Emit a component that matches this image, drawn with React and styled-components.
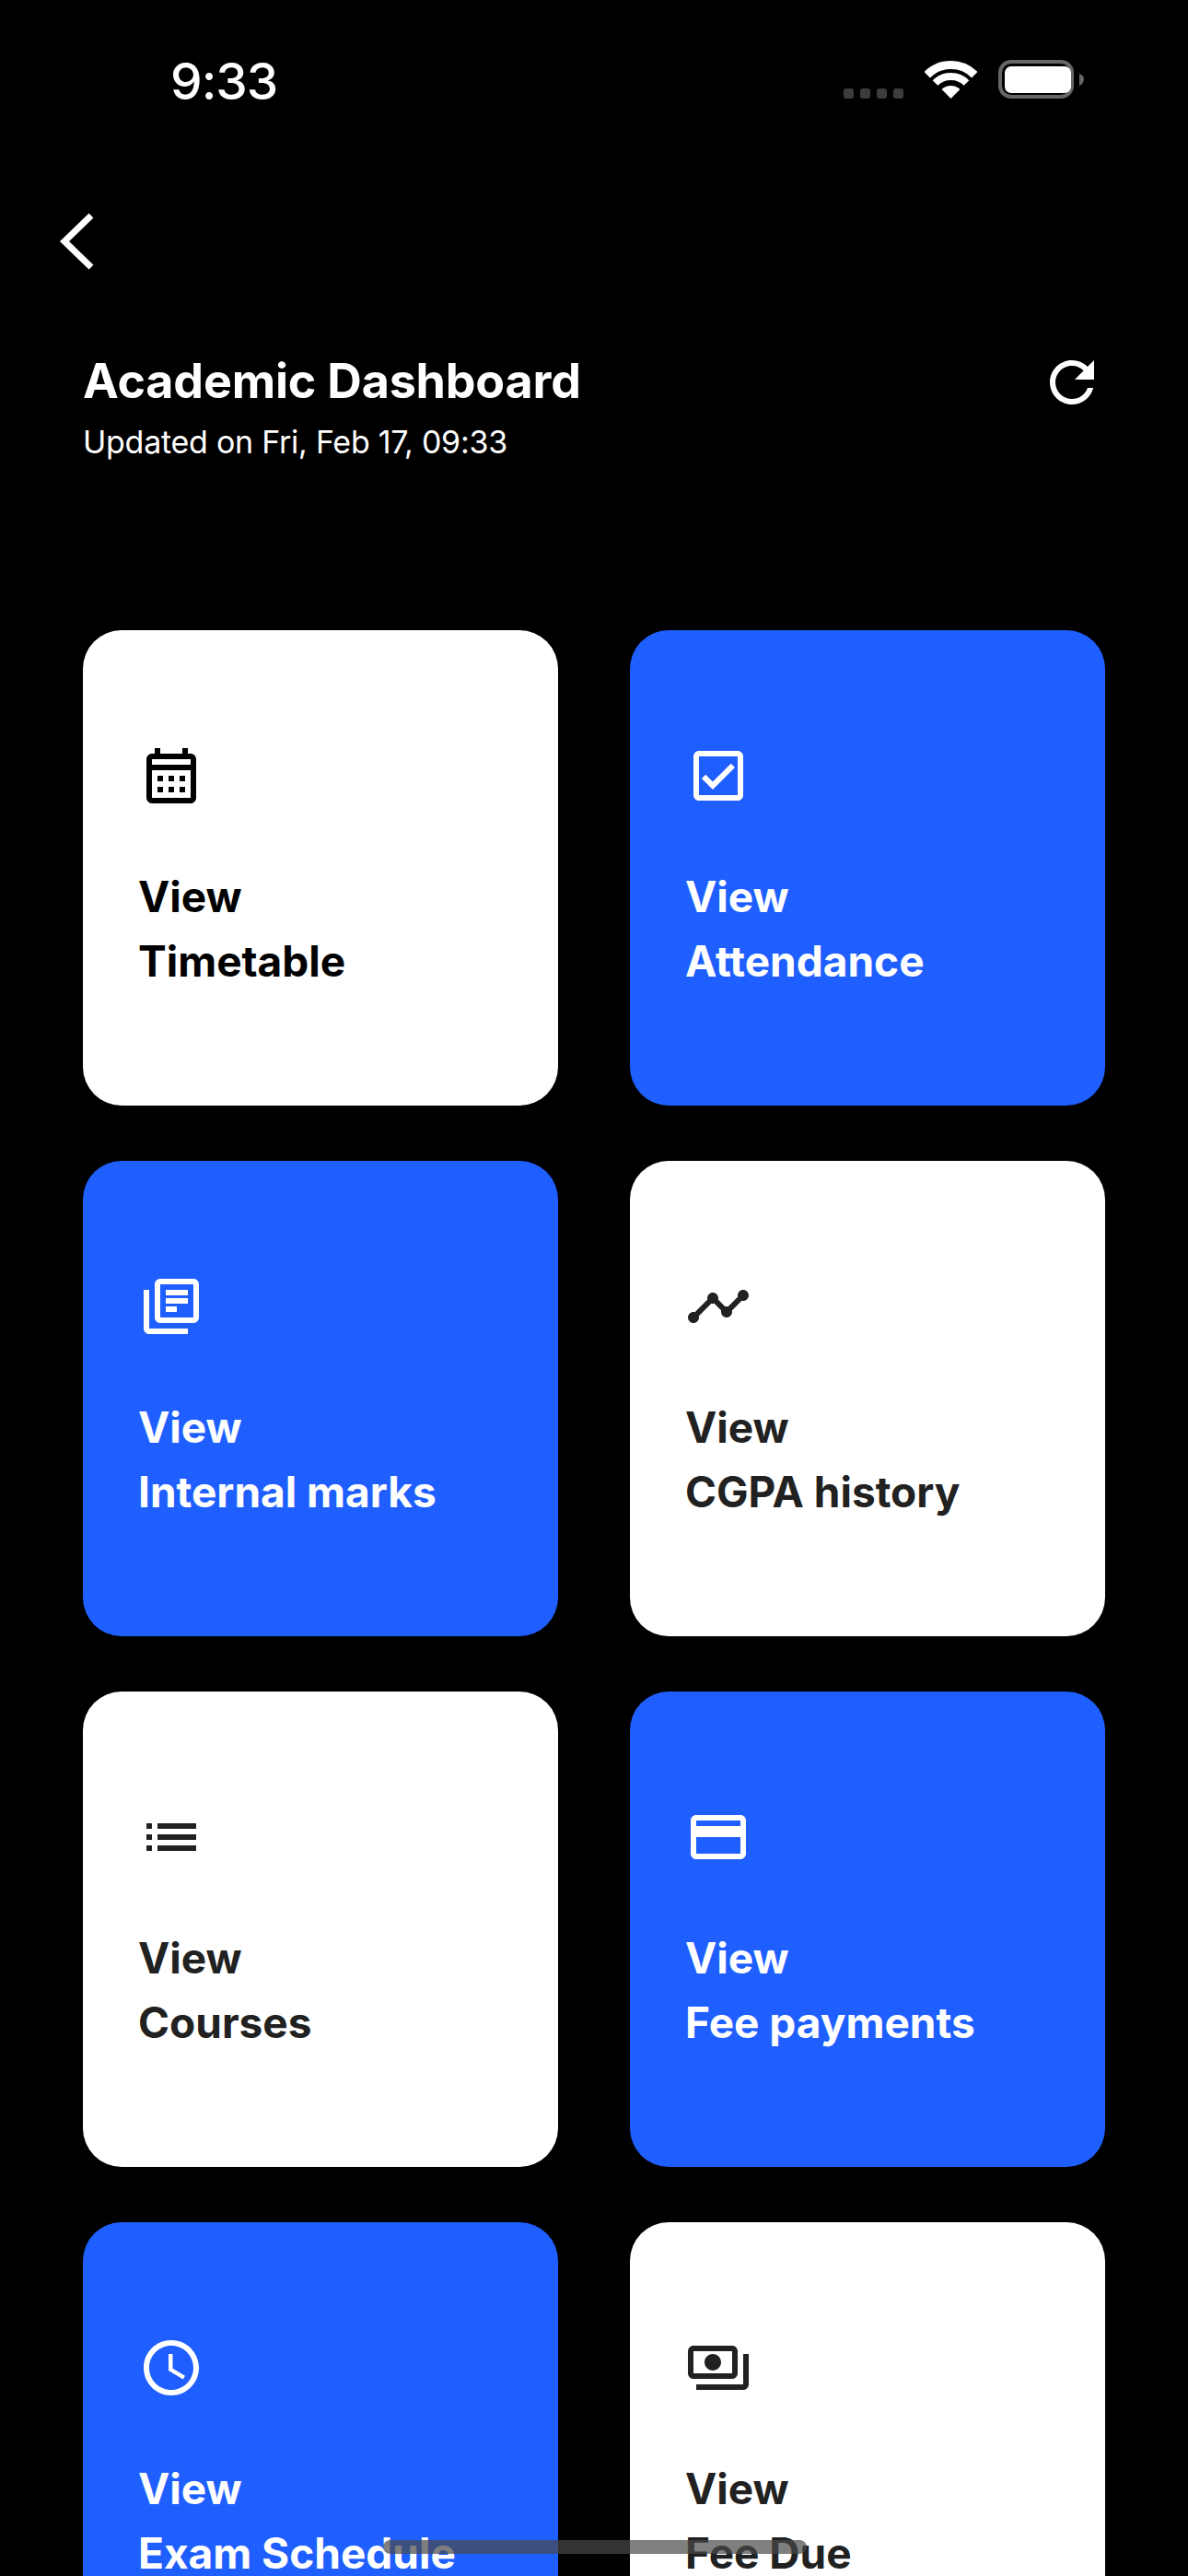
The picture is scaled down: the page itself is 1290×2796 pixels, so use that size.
import React from 'react'
import styled, { createGlobalStyle } from 'styled-components'
import {
  MdOutlineCalendarMonth,
  MdOutlineCheckBox,
  MdOutlineLibraryBooks,
  MdTimeline,
  MdList,
  MdOutlineCreditCard,
  MdOutlineAccessTime,
  MdOutlinePayments,
  MdRefresh,
} from 'react-icons/md'

const GlobalStyle = createGlobalStyle`
  html, body {
    margin: 0;
    padding: 0;
    background: #000;
  }
`

const Screen = styled.div`
  position: relative;
  width: 1290px;
  height: 2796px;
  overflow: hidden;
  background: #000;
  font-family: Inter, 'Liberation Sans', sans-serif;
  color: #fff;
`

const StatusBar = styled.div`
  display: flex;
  justify-content: space-between;
  align-items: flex-end;
  height: 42px;
  padding: 65px 112px 0 185px;
`

const Time = styled.div`
  font-size: 55px;
  font-weight: 500;
  line-height: 46px;
  letter-spacing: -1px;
  margin-bottom: -4px;
`

const StatusIcons = styled.div`
  display: flex;
  align-items: flex-end;
  gap: 23px;
`

const SignalDots = styled.div`
  display: flex;
  gap: 7px;
`

const SignalDot = styled.span`
  width: 11px;
  height: 11px;
  border-radius: 3px;
  background: #3c3c3c;
`

const BackButton = styled.div`
  display: flex;
  margin: 124px 0 0 64px;
  height: 62px;
`

const Header = styled.div`
  display: flex;
  justify-content: space-between;
  align-items: flex-start;
  padding: 0 90px;
  margin-top: 89px;
`

const Title = styled.h1`
  margin: 0;
  font-size: 52px;
  font-weight: 700;
  line-height: 64px;
  letter-spacing: -0.2px;
`

const Subtitle = styled.div`
  font-size: 34px;
  font-weight: 400;
  line-height: 44px;
  letter-spacing: -0.26px;
  margin-top: 12px;
`

const RefreshIcon = styled(MdRefresh)`
  display: block;
  margin-top: -3px;
`

const Grid = styled.div`
  display: grid;
  grid-template-columns: 516px 516px;
  grid-auto-rows: 516px;
  column-gap: 78px;
  row-gap: 60px;
  padding: 0 90px;
  margin-top: 182px;
`

const Card = styled.div`
  box-sizing: border-box;
  height: 516px;
  padding: 122px 60px 0;
  border-radius: 42px;
  background: ${(p) => (p.$blue ? '#1f5fff' : '#fff')};
  color: ${(p) => (p.$blue ? '#fff' : p.$ink || '#212121')};

  svg {
    display: block;
  }
`

const CardText = styled.div`
  margin-top: 61px;
  font-size: 46px;
  font-weight: 700;
  line-height: 69.5px;
`

const HomeIndicator = styled.div`
  position: absolute;
  left: 416px;
  top: 2757px;
  width: 460px;
  height: 15px;
  border-radius: 8px;
  background: rgba(73, 73, 73, 0.7);
`

const cards = [
  { Icon: MdOutlineCalendarMonth, label: 'Timetable', ink: '#000' },
  { Icon: MdOutlineCheckBox, label: 'Attendance', blue: true },
  { Icon: MdOutlineLibraryBooks, label: 'Internal marks', blue: true },
  { Icon: MdTimeline, label: 'CGPA history' },
  { Icon: MdList, label: 'Courses' },
  { Icon: MdOutlineCreditCard, label: 'Fee payments', blue: true },
  { Icon: MdOutlineAccessTime, label: 'Exam Schedule', blue: true },
  { Icon: MdOutlinePayments, label: 'Fee Due' },
]

function WifiIcon() {
  return (
    <svg width='57' height='41' viewBox='0 0 57 41' fill='none'>
      <path d='M2.7 15.2A36.5 36.5 0 0 1 54.3 15.2' stroke='#fff' strokeWidth='9' />
      <path d='M11.5 24A24 24 0 0 1 45.5 24' stroke='#fff' strokeWidth='8' />
      <path d='M28.5 41L18.6 31.1A14 14 0 0 1 38.4 31.1Z' fill='#fff' />
    </svg>
  )
}

function BatteryIcon() {
  return (
    <svg width='94' height='42' viewBox='0 0 94 42' fill='none'>
      <rect x='2' y='2' width='78' height='38' rx='12' stroke='#666' strokeWidth='4' />
      <rect x='7' y='7' width='72' height='29' rx='7' fill='#fff' />
      <path d='M88 15C91 16 93 18 93 21C93 24 91 27 88 28Z' fill='#666' />
    </svg>
  )
}

function BackIcon() {
  return (
    <svg width='40' height='62' viewBox='0 0 40 62' fill='none'>
      <path d='M35 3L6 31L35 59' stroke='#fff' strokeWidth='7' />
    </svg>
  )
}

export default function App() {
  return (
    <Screen>
      <GlobalStyle />
      <StatusBar>
        <Time>9:33</Time>
        <StatusIcons>
          <SignalDots>
            <SignalDot />
            <SignalDot />
            <SignalDot />
            <SignalDot />
          </SignalDots>
          <WifiIcon />
          <BatteryIcon />
        </StatusIcons>
      </StatusBar>
      <BackButton>
        <BackIcon />
      </BackButton>
      <Header>
        <div>
          <Title>Academic Dashboard</Title>
          <Subtitle>Updated on Fri, Feb 17, 09:33</Subtitle>
        </div>
        <RefreshIcon size={72} color='#fff' />
      </Header>
      <Grid>
        {cards.map(({ Icon, label, blue, ink }) => (
          <Card key={label} $blue={blue} $ink={ink}>
            <Icon size={72} />
            <CardText>
              View
              <br />
              {label}
            </CardText>
          </Card>
        ))}
      </Grid>
      <HomeIndicator />
    </Screen>
  )
}
